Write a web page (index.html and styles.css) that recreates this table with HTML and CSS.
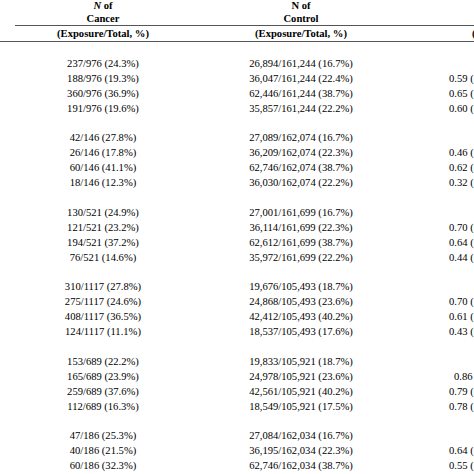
FILE: index.html
```html
<!DOCTYPE html>
<html>
<head>
<meta charset="utf-8">
<link rel="stylesheet" href="styles.css">
</head>
<body>
<table class="data">
  <colgroup>
    <col class="c0"><col class="c1"><col class="c2"><col class="c3">
  </colgroup>
  <thead>
    <tr class="h1">
      <th></th><th><i>N</i> of</th><th>N of</th><th></th>
    </tr>
    <tr class="h2">
      <th class="blank"></th><th>Cancer</th><th>Control</th><th></th>
    </tr>
    <tr class="h3">
      <th></th><th>(Exposure/Total, %)</th><th>(Exposure/Total, %)</th><th class="or">(95% CI)</th>
    </tr>
  </thead>
  <tbody>
    <tr><td></td><td></td><td></td><td></td></tr>
    <tr><td></td><td>237/976 (24.3%)</td><td>26,894/161,244 (16.7%)</td><td class="or"></td></tr>
    <tr><td></td><td>188/976 (19.3%)</td><td>36,047/161,244 (22.4%)</td><td class="or">0.59 (</td></tr>
    <tr><td></td><td>360/976 (36.9%)</td><td>62,446/161,244 (38.7%)</td><td class="or">0.65 (</td></tr>
    <tr><td></td><td>191/976 (19.6%)</td><td>35,857/161,244 (22.2%)</td><td class="or">0.60 (</td></tr>

    <tr><td></td><td></td><td></td><td></td></tr>
    <tr><td></td><td>42/146 (27.8%)</td><td>27,089/162,074 (16.7%)</td><td class="or"></td></tr>
    <tr><td></td><td>26/146 (17.8%)</td><td>36,209/162,074 (22.3%)</td><td class="or">0.46 (</td></tr>
    <tr><td></td><td>60/146 (41.1%)</td><td>62,746/162,074 (38.7%)</td><td class="or">0.62 (</td></tr>
    <tr><td></td><td>18/146 (12.3%)</td><td>36,030/162,074 (22.2%)</td><td class="or">0.32 (</td></tr>

    <tr><td></td><td></td><td></td><td></td></tr>
    <tr><td></td><td>130/521 (24.9%)</td><td>27,001/161,699 (16.7%)</td><td class="or"></td></tr>
    <tr><td></td><td>121/521 (23.2%)</td><td>36,114/161,699 (22.3%)</td><td class="or">0.70 (</td></tr>
    <tr><td></td><td>194/521 (37.2%)</td><td>62,612/161,699 (38.7%)</td><td class="or">0.64 (</td></tr>
    <tr><td></td><td>76/521 (14.6%)</td><td>35,972/161,699 (22.2%)</td><td class="or">0.44 (</td></tr>

    <tr><td></td><td></td><td></td><td></td></tr>
    <tr><td></td><td>310/1117 (27.8%)</td><td>19,676/105,493 (18.7%)</td><td class="or"></td></tr>
    <tr><td></td><td>275/1117 (24.6%)</td><td>24,868/105,493 (23.6%)</td><td class="or">0.70 (</td></tr>
    <tr><td></td><td>408/1117 (36.5%)</td><td>42,412/105,493 (40.2%)</td><td class="or">0.61 (</td></tr>
    <tr><td></td><td>124/1117 (11.1%)</td><td>18,537/105,493 (17.6%)</td><td class="or">0.43 (</td></tr>

    <tr><td></td><td></td><td></td><td></td></tr>
    <tr><td></td><td>153/689 (22.2%)</td><td>19,833/105,921 (18.7%)</td><td class="or"></td></tr>
    <tr><td></td><td>165/689 (23.9%)</td><td>24,978/105,921 (23.6%)</td><td class="or narrow">0.86</td></tr>
    <tr><td></td><td>259/689 (37.6%)</td><td>42,561/105,921 (40.2%)</td><td class="or">0.79 (</td></tr>
    <tr><td></td><td>112/689 (16.3%)</td><td>18,549/105,921 (17.5%)</td><td class="or">0.78 (</td></tr>

    <tr><td></td><td></td><td></td><td></td></tr>
    <tr><td></td><td>47/186 (25.3%)</td><td>27,084/162,034 (16.7%)</td><td class="or"></td></tr>
    <tr><td></td><td>40/186 (21.5%)</td><td>36,195/162,034 (22.3%)</td><td class="or">0.64 (</td></tr>
    <tr><td></td><td>60/186 (32.3%)</td><td>62,746/162,034 (38.7%)</td><td class="or">0.55 (</td></tr>
  </tbody>
</table>
</body>
</html>
```

FILE: styles.css
```css
html, body {
  margin: 0;
  padding: 0;
  background: #ffffff;
  overflow: hidden;
}

body {
  width: 474px;
  height: 474px;
}

.data {
  border-collapse: collapse;
  border-spacing: 0;
  table-layout: fixed;
  width: 555px;
  font-family: "Liberation Serif", "Times New Roman", serif;
  font-size: 10.6px;
  color: #000000;
}

.c0 { width: 15px; }
.c1 { width: 176px; }
.c2 { width: 220px; }
.c3 { width: 144px; }

.data th,
.data td {
  padding: 0;
  text-align: center;
  white-space: nowrap;
  overflow: hidden;
}

.data th {
  font-weight: bold;
}

.h1 th {
  height: 12px;
  line-height: 12px;
}

.h2 th {
  height: 13px;
  line-height: 13px;
  border-bottom: 1px solid #555555;
}

.h2 th.blank {
  border-bottom: none;
}

.h3 th {
  height: 15px;
  line-height: 15px;
  border-bottom: 1px solid #555555;
}

.data td {
  height: 14.9px;
  line-height: 14.9px;
}

.data .or {
  text-align: left;
  padding-left: 38px;
}

.data th.or {
  padding-left: 61px;
}

.data .or.narrow {
  padding-left: 43px;
}
```
